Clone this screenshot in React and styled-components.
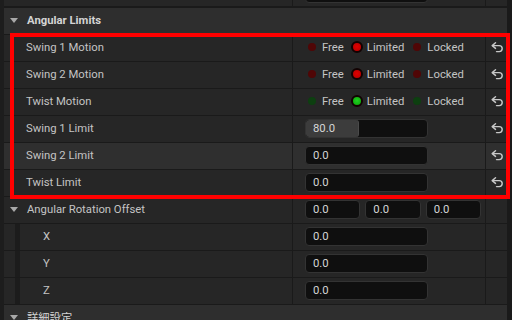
import React from "react";
import styled, { createGlobalStyle } from "styled-components";

const Global = createGlobalStyle`
  html, body { margin: 0; padding: 0; background: #1c1c1c; overflow: hidden; }
  body { font-family: Roboto, "Noto Sans", "Noto Sans CJK JP", sans-serif; }
  * { box-sizing: border-box; }
`;

const Page = styled.div`
  position: relative;
  width: 512px;
  height: 320px;
  display: flex;
  overflow: hidden;
  background: #1c1c1c;
`;

const Panel = styled.div`
  flex: 1;
  display: flex;
  flex-direction: column;
  padding-left: 4px;
  background: #1d1d1d;
`;

const Scrollbar = styled.div`
  width: 5px;
  background: #1a1a1a;
`;

const Row = styled.div`
  display: grid;
  grid-template-columns: 288px 193px 22px;
  height: ${(p) => (p.$short ? "7px" : "27px")};
  border-top: ${(p) => (p.$short ? "0" : "1px solid #1a1a1a")};
  border-bottom: ${(p) => (p.$short ? "1px solid #1a1a1a" : "0")};
  background: ${(p) => (p.$hover ? "#2f2f2f" : "#262626")};
  flex-shrink: 0;
`;

const CategoryRow = styled.div`
  display: flex;
  align-items: center;
  height: 27px;
  flex-shrink: 0;
  border-top: 1px solid #1a1a1a;
  background: #2e2e2e;
  padding-left: 6px;
  padding-bottom: 2px;
  gap: 9px;
  color: #d4d4d4;
  font-size: 11.3px;
  font-weight: ${(p) => (p.$bold ? 700 : 400)};
`;

const NameCell = styled.div`
  display: flex;
  align-items: center;
  padding-left: ${(p) => (p.$child ? "0" : p.$expand ? "6px" : "22px")};
  padding-bottom: ${(p) => (p.$child ? "0" : "2px")};
  gap: ${(p) => (p.$child ? "0" : "9px")};
  color: #c4c4c4;
  font-size: 11.3px;
  white-space: nowrap;
  overflow: hidden;
`;

const Indent = styled.div`
  align-self: stretch;
  width: 16px;
  border-left: 11px solid #262626;
  background: #1c1c1c;
  margin-right: 23px;
`;

const ChildLabel = styled.span`
  padding-bottom: 2px;
`;

const ValueCell = styled.div`
  display: flex;
  align-items: ${(p) => (p.$bottom ? "flex-end" : "center")};
  padding-left: ${(p) => (p.$radio ? "13px" : "12px")};
  padding-bottom: ${(p) => (p.$bottom ? "3px" : p.$radio ? "2px" : "1px")};
  border-left: 1px solid #1a1a1a;
  gap: ${(p) => (p.$radio ? "7px" : "5px")};
  overflow: hidden;
`;

const ResetCell = styled.div`
  display: flex;
  align-items: center;
  justify-content: center;
  border-left: 1px solid #1a1a1a;
  padding-left: 1px;
  padding-bottom: 2px;
`;

const Triangle = styled.span`
  width: 0;
  height: 0;
  border-left: 4px solid transparent;
  border-right: 4px solid transparent;
  border-top: 5px solid #a8a8a8;
  flex-shrink: 0;
`;

const Option = styled.div`
  display: flex;
  align-items: center;
  gap: 4px;
  color: #c4c4c4;
  font-size: 11.3px;
  white-space: nowrap;
`;

const DotBox = styled.span`
  width: 12px;
  height: 12px;
  flex-shrink: 0;
  display: flex;
  align-items: center;
  justify-content: center;
`;

const Dot = styled.span`
  display: block;
  flex-shrink: 0;
  border-radius: 50%;
  width: ${(p) => (p.$on ? "12px" : "8px")};
  height: ${(p) => (p.$on ? "12px" : "8px")};
  background: ${(p) =>
    p.$on
      ? p.$green
        ? "radial-gradient(circle at 50% 45%, #22d022 0%, #10b010 70%)"
        : "radial-gradient(circle at 50% 45%, #e00000 0%, #c00000 70%)"
      : p.$green
      ? "#0d3f10"
      : "#500606"};
  border: ${(p) => (p.$on ? "2px solid #120202" : "0")};
`;

const Field = styled.div`
  position: relative;
  width: 123px;
  flex: ${(p) => (p.$flex ? "1" : "none")};
  height: 19px;
  border-radius: 4px;
  background: #0f0f0f;
  border: 1px solid #333;
  color: #d6d6d6;
  font-size: 11.3px;
  display: flex;
  align-items: center;
  padding-left: 7px;
  overflow: hidden;
`;

const FieldGroup = styled.div`
  display: flex;
  gap: 5px;
  width: 176px;
`;

const Fill = styled.div`
  position: absolute;
  left: 0;
  top: 0;
  bottom: 0;
  border-radius: 3px;
  background: #3c3c3c;
  border-right: 1px solid #4a4a4a;
`;

const FieldText = styled.span`
  position: relative;
`;

const Highlight = styled.div`
  position: absolute;
  left: 10px;
  top: 33px;
  width: 500px;
  height: 166px;
  border: 4px solid #ff0000;
  pointer-events: none;
`;

const ResetIcon = () => (
  <svg width="13" height="11" viewBox="0 0 13 11" fill="none">
    <path d="M4.5 0.8 L1.2 3.6 L4.5 6.4" stroke="#c8c8c8" strokeWidth="1.4" strokeLinecap="round" strokeLinejoin="round" />
    <path d="M1.6 3.6 H8.2 a3 3 0 0 1 0 6 H5.5" stroke="#c8c8c8" strokeWidth="1.4" strokeLinecap="round" strokeLinejoin="round" />
  </svg>
);

const Radio = ({ value, green }) => (
  <>
    {["Free", "Limited", "Locked"].map((o) => (
      <Option key={o}>
        <DotBox>
          <Dot $on={o === value} $green={green} />
        </DotBox>
        {o}
      </Option>
    ))}
  </>
);

const motions = [
  { name: "Swing 1 Motion", green: false },
  { name: "Swing 2 Motion", green: false },
  { name: "Twist Motion", green: true },
];

const limits = [
  { name: "Swing 1 Limit", value: "80.0", fill: 53 },
  { name: "Swing 2 Limit", value: "0.0", hover: true },
  { name: "Twist Limit", value: "0.0" },
];

export default function App() {
  return (
    <>
      <Global />
      <Page>
        <Panel>
          <Row $short>
            <NameCell />
            <ValueCell $bottom>
              <Field />
            </ValueCell>
            <ResetCell />
          </Row>
          <CategoryRow $bold>
            <Triangle />
            Angular Limits
          </CategoryRow>
          {motions.map((m) => (
            <Row key={m.name}>
              <NameCell>{m.name}</NameCell>
              <ValueCell $radio>
                <Radio value="Limited" green={m.green} />
              </ValueCell>
              <ResetCell>
                <ResetIcon />
              </ResetCell>
            </Row>
          ))}
          {limits.map((l) => (
            <Row key={l.name} $hover={l.hover}>
              <NameCell>{l.name}</NameCell>
              <ValueCell>
                <Field>
                  {l.fill ? <Fill style={{ width: `${l.fill}px` }} /> : null}
                  <FieldText>{l.value}</FieldText>
                </Field>
              </ValueCell>
              <ResetCell>
                <ResetIcon />
              </ResetCell>
            </Row>
          ))}
          <Row>
            <NameCell $expand>
              <Triangle />
              Angular Rotation Offset
            </NameCell>
            <ValueCell>
              <FieldGroup>
                <Field $flex>0.0</Field>
                <Field $flex>0.0</Field>
                <Field $flex>0.0</Field>
              </FieldGroup>
            </ValueCell>
            <ResetCell />
          </Row>
          {["X", "Y", "Z"].map((a) => (
            <Row key={a}>
              <NameCell $child>
                <Indent />
                <ChildLabel>{a}</ChildLabel>
              </NameCell>
              <ValueCell>
                <Field>0.0</Field>
              </ValueCell>
              <ResetCell />
            </Row>
          ))}
          <CategoryRow>
            <Triangle />
            詳細設定
          </CategoryRow>
        </Panel>
        <Scrollbar />
        <Highlight />
      </Page>
    </>
  );
}
